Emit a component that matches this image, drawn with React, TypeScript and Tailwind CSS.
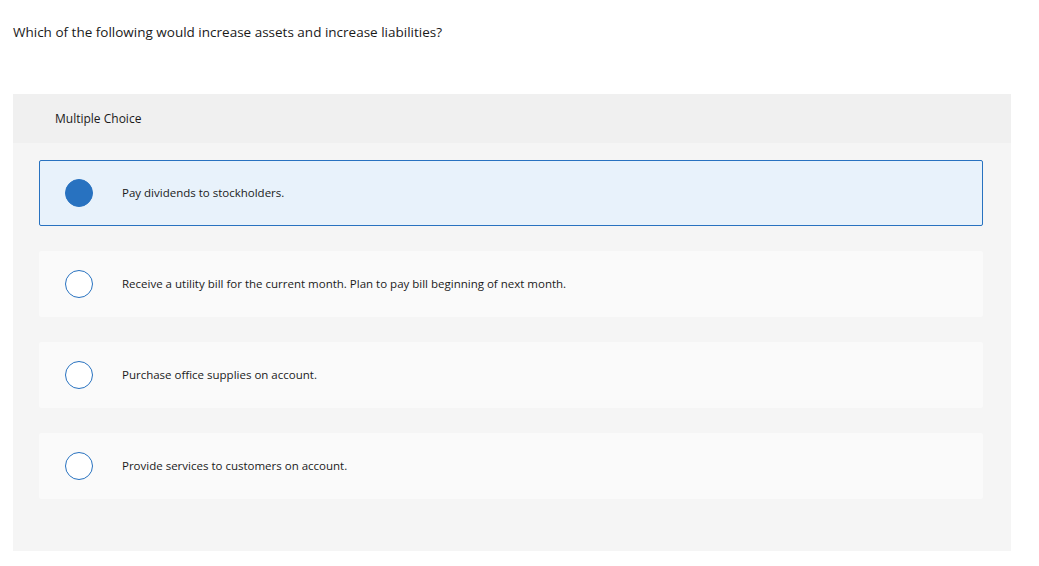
export default function App() {
  const opts = [
    "Pay dividends to stockholders.",
    "Receive a utility bill for the current month. Plan to pay bill beginning of next month.",
    "Purchase office supplies on account.",
    "Provide services to customers on account.",
  ];
  return (
    <div className="w-[1039px] h-[566px] bg-white text-[#1a1a1a]" style={{ fontFamily: "'Open Sans', sans-serif" }}>
      <div className="pl-[13px] pt-[22px] text-[13.5px] leading-[20px]">Which of the following would increase assets and increase liabilities?</div>
      <div className="ml-[13px] mt-[52px] w-[998px] h-[457px] bg-[#f5f5f5]">
        <div className="h-[49px] bg-[#f0f0f0] pl-[42px] flex items-center text-[12px]">Multiple Choice</div>
        <div className="pl-[26px] pt-[17px] flex flex-col gap-[25px]">
          {opts.map((o, i) => (
            <div key={i} className={`w-[944px] h-[66px] flex items-center rounded-[2px] ${i === 0 ? "bg-[#e8f2fb] border border-[#2872c0]" : "bg-[#fafafa] border border-transparent"}`}>
              <div className="w-[77px] flex justify-center">
                <div className={`w-[28px] h-[28px] rounded-full border border-[#2872c0] ${i === 0 ? "bg-[#2872c0]" : "bg-white"}`} />
              </div>
              <div className="ml-[5px] text-[11.5px]">{o}</div>
            </div>
          ))}
        </div>
      </div>
    </div>
  );
}
